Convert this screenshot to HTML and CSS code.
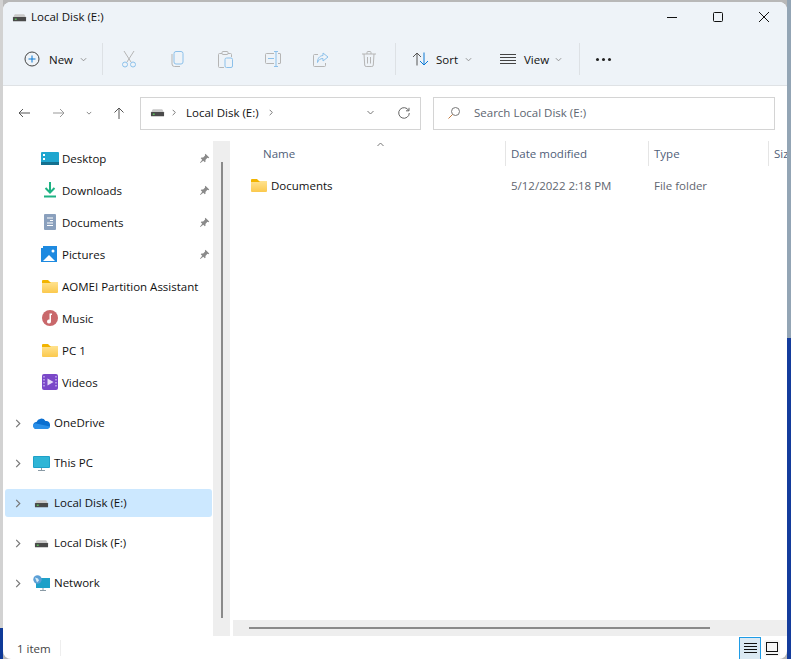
FILE: index.html
```html
<!DOCTYPE html>
<html lang="en">
  <head>
    <meta charset="UTF-8" />
    <title>Local Disk (E:)</title>
    <link rel="stylesheet" href="styles.css">
  </head>
  <body>
    <svg class="defs" width="0" height="0">
      <defs>
        <linearGradient id="folder-fill" x1="0" y1="0" x2="0" y2="1">
          <stop offset="0" stop-color="#ffe28f"/>
          <stop offset="1" stop-color="#fbc94d"/>
        </linearGradient>
        <symbol id="drive" viewBox="0 0 16 16">
          <path d="M3 4.500h10l2 3.500H1z" fill="#c9c9c9"/>
          <rect x="1" y="7.500" width="14" height="4.500" rx=".6" fill="#4a4a4a"/>
          <rect x="3" y="9.200" width="2" height="1.200" fill="#5fe05f"/>
        </symbol>
        <symbol id="folder" viewBox="0 0 18 16">
          <path d="M1 3a1 1 0 0 1 1-1h5l2 2h8v3H1z" fill="#f2b400"/>
          <path d="M1 5h8l1-1h7v10a1 1 0 0 1-1 1H2a1 1 0 0 1-1-1z" fill="url(#folder-fill)"/>
        </symbol>
        <symbol id="pin" viewBox="0 0 12 12">
          <path d="M7 .8l4.200 4.200-1 .6-1-.3L7 7.500l.2 1.800-.9.800L4.700 8.500 1.500 11l-.5-.5 2.500-3.200L1.900 5.700l.8-.9 1.800.2 2.200-2.200-.3-1z" fill="#8a8a8a"/>
        </symbol>
        <symbol id="caret" viewBox="0 0 8 5">
          <path d="M1 1l3 3 3-3" fill="none" stroke="currentColor" stroke-width="1"/>
        </symbol>
        <symbol id="chevron" viewBox="0 0 6 10">
          <path d="M1 1l4 4-4 4" fill="none" stroke="currentColor" stroke-width="1.300"/>
        </symbol>
      </defs>
    </svg>

    <div class="window">
      <div class="titlebar">
        <div class="title">
          <svg class="drive-small" width="15" height="15"><use href="#drive"/></svg>
          <span>Local Disk (E:)</span>
        </div>
        <div class="win-buttons">
          <svg width="12" height="12" viewBox="0 0 12 12"><path d="M1 6.500h10" stroke="#111" stroke-width="1"/></svg>
          <svg width="12" height="12" viewBox="0 0 12 12"><rect x="1.500" y="1.500" width="9" height="9" rx="1" fill="none" stroke="#111" stroke-width="1"/></svg>
          <svg width="12" height="12" viewBox="0 0 12 12"><path d="M1 1l10 10M11 1L1 11" stroke="#111" stroke-width="1"/></svg>
        </div>
      </div>

      <div class="toolbar">
        <div class="tb-new">
          <svg width="16" height="16" viewBox="0 0 16 16"><circle cx="8" cy="8" r="7" fill="none" stroke="#444" stroke-width="1"/><path d="M8 4.500v7M4.500 8h7" stroke="#0a78d4" stroke-width="1"/></svg>
          <span>New</span>
          <svg class="caret" width="7" height="5"><use href="#caret"/></svg>
        </div>
        <div class="tb-sep"></div>
        <div class="tb-icon">
          <svg width="16" height="18" viewBox="0 0 16 18"><path d="M3 1l7 11M13 1L6 12" fill="none" stroke="#b5b5b5" stroke-width="1"/><circle cx="4" cy="14.500" r="2.500" fill="none" stroke="#8cc0ea" stroke-width="1"/><circle cx="12" cy="14.500" r="2.500" fill="none" stroke="#8cc0ea" stroke-width="1"/></svg>
        </div>
        <div class="tb-icon">
          <svg width="13" height="16" viewBox="0 0 13 16"><rect x="3" y=".5" width="9" height="12.500" rx="2" fill="none" stroke="#8cc0ea"/><path d="M1 3v10a2.500 2.500 0 0 0 2.500 2.500H9" fill="none" stroke="#b5b5b5"/></svg>
        </div>
        <div class="tb-icon">
          <svg width="15" height="17" viewBox="0 0 15 17"><path d="M4 2.500H1.500a1 1 0 0 0-1 1v12a1 1 0 0 0 1 1H6M10 2.500h2.500a1 1 0 0 1 1 1V6" fill="none" stroke="#b5b5b5"/><rect x="4" y=".5" width="6" height="3" rx="1" fill="none" stroke="#b5b5b5"/><rect x="7" y="7" width="7.500" height="9.500" rx="1.500" fill="none" stroke="#8cc0ea"/></svg>
        </div>
        <div class="tb-icon">
          <svg width="16" height="16" viewBox="0 0 16 16"><path d="M9 2.500H1.500a1 1 0 0 0-1 1v8a1 1 0 0 0 1 1H9M13 2.500h2a.5.500 0 0 1 .5.500v9a.5.500 0 0 1-.5.500h-2" fill="none" stroke="#b5b5b5"/><path d="M3 7.500h6" stroke="#8cc0ea" stroke-width="1.200"/><path d="M9 .5h4M11 .5v15M9 15.500h4" fill="none" stroke="#8cc0ea"/></svg>
        </div>
        <div class="tb-icon">
          <svg width="16" height="15" viewBox="0 0 16 15"><path d="M5 2.500H1.500a1 1 0 0 0-1 1v10a1 1 0 0 0 1 1h10a1 1 0 0 0 1-1V11" fill="none" stroke="#b5b5b5"/><path d="M10 1l5 4-5 4V6.500C7 6.500 5.500 8 4.500 10.500 4.500 6.500 6.500 3.800 10 3.500z" fill="none" stroke="#8cc0ea"/></svg>
        </div>
        <div class="tb-icon">
          <svg width="14" height="16" viewBox="0 0 14 16"><path d="M0 3h14M5 3V1.500a1 1 0 0 1 1-1h2a1 1 0 0 1 1 1V3M2 3l.7 11a1.500 1.500 0 0 0 1.500 1.500h5.600a1.500 1.500 0 0 0 1.500-1.500L12 3M5.500 6v6.500M8.500 6v6.500" fill="none" stroke="#b5b5b5"/></svg>
        </div>
        <div class="tb-sep sep-after-icons"></div>
        <div class="tb-sort">
          <svg width="17" height="14" viewBox="0 0 17 14"><path d="M5 13.500V1M1 5l4-4 4 4" fill="none" stroke="#555"/><path d="M12 .5V13M8 9l4 4 4-4" fill="none" stroke="#0a78d4"/></svg>
          <span>Sort</span>
          <svg class="caret" width="7" height="5"><use href="#caret"/></svg>
        </div>
        <div class="tb-view">
          <svg width="16" height="11" viewBox="0 0 16 11"><path d="M0 .5h16M0 3.500h16M0 6.500h16M0 9.500h16" stroke="#444" stroke-width="1"/></svg>
          <span>View</span>
          <svg class="caret" width="7" height="5"><use href="#caret"/></svg>
        </div>
        <div class="tb-sep"></div>
        <div class="tb-more"><i></i><i></i><i></i></div>
      </div>

      <div class="addressrow">
        <div class="nav-arrows">
          <svg width="12" height="10" viewBox="0 0 12 10"><path d="M12 5H1M5 1L1 5l4 4" fill="none" stroke="#555"/></svg>
          <svg class="arrow-off" width="12" height="10" viewBox="0 0 12 10"><path d="M0 5h11M7 1l4 4-4 4" fill="none" stroke="#999"/></svg>
          <svg class="arrow-drop" width="6" height="4" viewBox="0 0 8 5"><use href="#caret"/></svg>
          <svg width="12" height="12" viewBox="0 0 12 12"><path d="M6 12V1M1.500 5.500L6 1l4.500 4.500" fill="none" stroke="#555"/></svg>
        </div>
        <div class="addressbox">
          <svg width="15" height="15"><use href="#drive"/></svg>
          <svg class="crumb" width="4" height="7"><use href="#chevron"/></svg>
          <span>Local Disk (E:)</span>
          <svg class="crumb crumb-end" width="4" height="7"><use href="#chevron"/></svg>
          <svg class="addr-drop" width="9" height="5"><use href="#caret"/></svg>
          <svg class="refresh" width="12" height="12" viewBox="0 0 12 12"><path d="M10.700 3.500A5.300 5.300 0 1 0 11.300 6M11 .8v3H8" fill="none" stroke="#666"/></svg>
        </div>
        <div class="searchbox">
          <svg width="12" height="12" viewBox="0 0 12 12"><circle cx="7.500" cy="4.500" r="4" fill="none" stroke="#777"/><path d="M4.500 7.500L.5 11.500" stroke="#c47a3c"/></svg>
          <span>Search Local Disk (E:)</span>
        </div>
      </div>

      <div class="content">
        <div class="nav">
          <div class="nav-list">
            <div class="quick">
              <div class="quick-row">
                <svg width="18" height="15" viewBox="0 0 18 15"><rect y="1" width="18" height="13" rx="1" fill="#1fa6cf"/><rect y="11" width="18" height="3" fill="#14708f"/><rect x="2" y="3" width="2" height="2" fill="#fff"/><rect x="2" y="7" width="2" height="2" fill="#fff"/></svg>
                <span class="label">Desktop</span>
                <svg class="pin" width="11" height="11"><use href="#pin"/></svg>
              </div>
              <div class="quick-row">
                <svg width="18" height="16" viewBox="0 0 18 16"><path d="M9 0v10M4.500 6L9 10.500 13.500 6" fill="none" stroke="#1eb283" stroke-width="2"/><rect x="3" y="13.500" width="12" height="2" fill="#1eb283"/></svg>
                <span class="label">Downloads</span>
                <svg class="pin" width="11" height="11"><use href="#pin"/></svg>
              </div>
              <div class="quick-row">
                <svg width="18" height="16" viewBox="0 0 18 16"><rect x="3" width="12" height="16" rx="1" fill="#8aa0bd"/><path d="M6 4h6M9 6.500h3M6 9h6M6 11.500h6" stroke="#fff" stroke-width="1"/></svg>
                <span class="label">Documents</span>
                <svg class="pin" width="11" height="11"><use href="#pin"/></svg>
              </div>
              <div class="quick-row">
                <svg width="18" height="16" viewBox="0 0 18 16"><rect x="2" width="14" height="14" fill="#1e8ae0"/><path d="M0 2h16v14H0z" fill="#1e8ae0"/><path d="M2 15l6-6 6 6z" fill="#fff"/><circle cx="12" cy="5" r="1.500" fill="#fff"/></svg>
                <span class="label">Pictures</span>
                <svg class="pin" width="11" height="11"><use href="#pin"/></svg>
              </div>
              <div class="quick-row">
                <svg width="18" height="16"><use href="#folder"/></svg>
                <span class="label">AOMEI Partition Assistant</span>
              </div>
              <div class="quick-row">
                <svg width="18" height="16" viewBox="0 0 16 16"><circle cx="8" cy="8" r="8" fill="#c9686b"/><path d="M7.500 3.500h2.500v1.500H9v6.500a2 2 0 1 1-1.500-1.900z" fill="#fff"/></svg>
                <span class="label">Music</span>
              </div>
              <div class="quick-row">
                <svg width="18" height="16"><use href="#folder"/></svg>
                <span class="label">PC 1</span>
              </div>
              <div class="quick-row">
                <svg width="18" height="16" viewBox="0 0 16 16"><rect width="16" height="16" rx="2" fill="#7a48c8"/><path d="M5.500 4.500v7l6-3.500z" fill="#e6dcf7"/><path d="M2 2v12M14 2v12" stroke="#c3aaf0" stroke-width="1.500" stroke-dasharray="1.500 1.500"/></svg>
                <span class="label">Videos</span>
              </div>
            </div>

            <div class="tree">
              <div class="tree-row">
                <svg class="chevron" width="6" height="9"><use href="#chevron"/></svg>
                <svg width="17" height="11" viewBox="0 0 17 11"><path d="M4 11a3.500 3.500 0 0 1-.5-7A5 5 0 0 1 12.500 3 4 4 0 0 1 13.500 11z" fill="#0a6fd0"/><path d="M3 11a3 3 0 0 1-1-5.800L17 8.500A3 3 0 0 1 14 11z" fill="#2a8fe8"/></svg>
                <span class="label">OneDrive</span>
              </div>
              <div class="tree-row">
                <svg class="chevron" width="6" height="9"><use href="#chevron"/></svg>
                <svg width="17" height="15" viewBox="0 0 17 15"><rect width="17" height="12" rx="1" fill="#1ea0c8"/><path d="M1 1h15v10H1z" fill="#2fb5d6"/><path d="M8.500 12v2M5 14.500h7" stroke="#8a9aa5" stroke-width="1"/></svg>
                <span class="label">This PC</span>
              </div>
              <div class="tree-row selected">
                <svg class="chevron" width="6" height="9"><use href="#chevron"/></svg>
                <svg width="17" height="15"><use href="#drive"/></svg>
                <span class="label">Local Disk (E:)</span>
              </div>
              <div class="tree-row">
                <svg class="chevron" width="6" height="9"><use href="#chevron"/></svg>
                <svg width="17" height="15"><use href="#drive"/></svg>
                <span class="label">Local Disk (F:)</span>
              </div>
              <div class="tree-row">
                <svg class="chevron" width="6" height="9"><use href="#chevron"/></svg>
                <svg width="17" height="16" viewBox="0 0 17 16"><rect x="3" y="3" width="14" height="10" fill="#1ea0c8"/><path d="M10 13v2M7 15.500h6" stroke="#8a9aa5"/><circle cx="4.500" cy="4.500" r="4.200" fill="#5b9fd6"/><path d="M2 2.500l3 1 1 2-2 2z" fill="#d6ecf7"/></svg>
                <span class="label">Network</span>
              </div>
            </div>
          </div>
          <div class="nav-scroll"><div class="nav-thumb"></div></div>
        </div>

        <div class="files">
          <div class="file-table">
            <div class="sort-caret"><svg width="9" height="5" viewBox="0 0 8 5"><path d="M1 4l3-3 3 3" fill="none" stroke="#777"/></svg></div>
            <div class="file-head">
              <div class="col-name">Name</div>
              <div class="col">Date modified</div>
              <div class="col">Type</div>
              <div class="col">Size</div>
            </div>
            <div class="file-row">
              <div class="file-name">
                <svg width="18" height="16"><use href="#folder"/></svg>
                <span>Documents</span>
              </div>
              <div class="file-meta">5/12/2022 2:18 PM</div>
              <div class="file-meta">File folder</div>
              <div></div>
            </div>
          </div>
          <div class="h-scroll"><div class="h-thumb"></div></div>
        </div>
      </div>

      <div class="statusbar">
        <span class="count">1 item</span>
        <div class="status-sep"></div>
        <div class="view-btn active">
          <svg width="13" height="11" viewBox="0 0 13 11"><path d="M0 .5h13M0 3.500h13M0 6.500h13M0 9.500h13" stroke="#111"/></svg>
        </div>
        <div class="view-btn">
          <svg width="13" height="13" viewBox="0 0 13 13"><rect x=".5" y=".5" width="11" height="9" fill="none" stroke="#111"/><path d="M0 12.500h12" stroke="#111"/></svg>
        </div>
      </div>
    </div>
  </body>
</html>
```

FILE: styles.css
```css
html, body {
  margin: 0;
  padding: 0;
  height: 659px;
  overflow: hidden;
}
body {
  font-family: "Open Sans", "Noto Sans", sans-serif;
  font-size: 11.5px;
  color: #111;
  background:
    linear-gradient(#93a5b5 0 338px, #143c9c 338px) right / 4px 100% no-repeat,
    linear-gradient(#d2d2d2 0 628px, #0f3a98 628px) left / 3px 100% no-repeat,
    #b8b8b8;
}
.defs {
  display: block;
  height: 0;
}
.window {
  width: 784px;
  height: 657px;
  margin: 2px 0 0 3px;
  background: #fff;
  border-radius: 8px;
  overflow: hidden;
  display: flex;
  flex-direction: column;
}
svg {
  display: block;
  flex: none;
}

/* title and command bar */
.titlebar {
  height: 38px;
  flex: none;
  display: flex;
  align-items: center;
  justify-content: space-between;
  background: #eef3f8;
  padding-left: 9px;
  padding-bottom: 8px;
  box-sizing: border-box;
}
.title {
  display: flex;
  align-items: center;
  gap: 4px;
  font-size: 11.5px;
}
.title span {
  margin-bottom: 2px;
}
.win-buttons {
  display: flex;
  gap: 34px;
  padding-right: 17px;
}
.toolbar {
  height: 46px;
  flex: none;
  display: flex;
  align-items: center;
  background: #eef3f8;
  border-bottom: 1px solid #dfe2e5;
  box-sizing: border-box;
  padding-bottom: 7px;
}
.caret {
  color: #888;
}
.tb-new {
  width: 99px;
  display: flex;
  align-items: center;
  padding-left: 21px;
  box-sizing: border-box;
}
.tb-new span {
  margin: 0 7px 0 9px;
}
.tb-sep {
  width: 1px;
  height: 32px;
  background: #dde1e5;
  flex: none;
}
.tb-icon {
  width: 48px;
  display: flex;
  justify-content: center;
  flex: none;
}
.tb-sep + .tb-icon {
  margin-left: 2px;
}
.sep-after-icons {
  margin-left: 2px;
}
.tb-sort {
  display: flex;
  align-items: center;
  padding-left: 16px;
  width: 104px;
  box-sizing: border-box;
}
.tb-sort span {
  margin: 0 7px 0 7px;
}
.tb-view {
  display: flex;
  align-items: center;
  width: 79px;
}
.tb-view span {
  margin: 0 6px 0 8px;
}
.tb-more {
  display: flex;
  gap: 3px;
  padding-left: 16px;
}
.tb-more i {
  width: 3px;
  height: 3px;
  border-radius: 50%;
  background: #222;
  display: block;
}

/* address row */
.addressrow {
  height: 55px;
  flex: none;
  display: flex;
  align-items: center;
  box-sizing: border-box;
}
.nav-arrows {
  width: 137px;
  display: flex;
  align-items: center;
  padding-left: 15px;
  padding-bottom: 2px;
  box-sizing: border-box;
  color: #666;
}
.arrow-off {
  margin-left: 23px;
}
.arrow-drop {
  margin: 0 21px;
}
.addressbox, .searchbox {
  height: 33px;
  box-sizing: border-box;
  border: 1px solid #d4d4d4;
  display: flex;
  align-items: center;
  background: #fff;
  padding-bottom: 2px;
}
.addressbox {
  width: 281px;
  padding-left: 9px;
  color: #111;
}
.crumb {
  margin: 0 10px 0 7px;
  color: #666;
}
.crumb-end {
  margin: 0 0 0 10px;
}
.addr-drop {
  margin-left: 93px;
  color: #777;
}
.refresh {
  margin-left: 23px;
}
.searchbox {
  width: 342px;
  margin-left: 12px;
  padding-left: 14px;
  color: #5d6570;
}
.searchbox span {
  margin-left: 14px;
}

/* nav pane */
.content {
  flex: 1;
  min-height: 0;
  display: flex;
}
.nav {
  width: 227px;
  flex: none;
  display: flex;
  border-right: 3px solid #fff;
  height: 495px;
}
.nav-list {
  width: 210px;
  flex: none;
}
.quick {
  padding-top: 1px;
}
.quick-row {
  height: 32px;
  display: flex;
  align-items: center;
  padding-left: 38px;
  box-sizing: border-box;
}
.quick-row .label {
  margin-left: 3px;
}
.pin {
  margin-left: auto;
  margin-right: 3px;
}
.tree {
  padding: 11px 0 0 2px;
  display: flex;
  flex-direction: column;
  gap: 12px;
}
.tree-row {
  height: 28px;
  width: 207px;
  display: flex;
  align-items: center;
  padding-left: 10px;
  box-sizing: border-box;
  border-radius: 3px;
}
.tree-row .label {
  margin: 0 0 2px 4px;
}
.chevron {
  color: #777;
  margin-right: 12px;
}
.selected {
  background: #cce8ff;
}
.nav-scroll {
  width: 17px;
  background: #eeeeee;
  padding-top: 21px;
  box-sizing: border-box;
  display: flex;
  justify-content: center;
}
.nav-thumb {
  width: 2px;
  height: 456px;
  background: #8a8a8a;
}

/* file pane */
.files {
  flex: 1;
  min-width: 0;
  display: flex;
  flex-direction: column;
  height: 495px;
  overflow: hidden;
}
.file-table {
  flex: 1;
  position: relative;
}
.sort-caret {
  position: absolute;
  left: 143px;
  top: 1px;
}
.file-head, .file-row {
  display: grid;
  grid-template-columns: 272px 143px 120px 60px;
}
.file-head {
  height: 25px;
  align-items: center;
  color: #4f5e78;
}
.col-name {
  padding-left: 30px;
  margin-bottom: 1px;
}
.col {
  border-left: 1px solid #e5e5e5;
  padding-left: 5px;
  height: 25px;
  line-height: 25px;
  white-space: nowrap;
}
.file-row {
  margin-top: 7px;
  height: 24px;
  align-items: center;
}
.file-name {
  display: flex;
  align-items: center;
  padding-left: 17px;
  gap: 3px;
}
.file-meta {
  color: #5f6670;
  padding-left: 6px;
}
.h-scroll {
  height: 16px;
  flex: none;
  background: #eeeeee;
  padding: 7px 0 0 16px;
  box-sizing: border-box;
}
.h-thumb {
  width: 461px;
  height: 2px;
  background: #8a8a8a;
}

/* status bar */
.statusbar {
  height: 22px;
  flex: none;
  display: flex;
  align-items: center;
  padding-left: 14px;
  box-sizing: border-box;
  color: #444;
}
.count {
  width: 43px;
}
.status-sep {
  width: 1px;
  height: 16px;
  background: #eeeeee;
  margin-right: 678px;
}
.view-btn {
  width: 16px;
  height: 16px;
  background: #f5f5f5;
  display: flex;
  align-items: center;
  justify-content: center;
  border-radius: 2px;
  margin-left: 3px;
}
.view-btn.active {
  width: 22px;
  height: 23px;
  margin-left: 0;
  margin-top: 1px;
  background: #dbe9f3;
  border: 1px solid #1f9ce6;
  border-radius: 0;
  box-sizing: border-box;
}
```
